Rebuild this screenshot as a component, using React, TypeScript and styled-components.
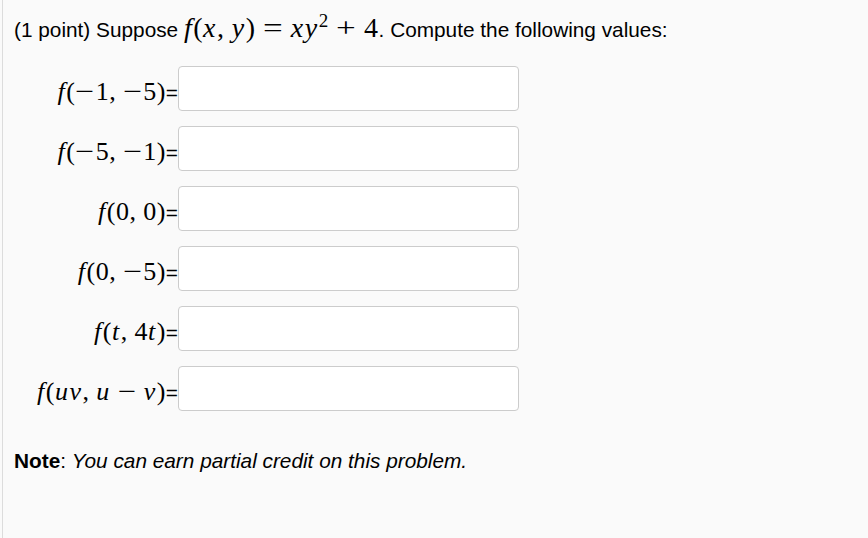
import React from "react";
import styled, { createGlobalStyle } from "styled-components";

const GlobalStyle = createGlobalStyle`
  html, body {
    margin: 0;
    padding: 0;
    background: #fafafa;
  }
`;

const Page = styled.div`
  box-sizing: border-box;
  min-height: 538px;
  margin-left: 2px;
  border-left: 1px solid #dcdcdc;
  padding: 11px 0 0 11px;
  font-family: "Liberation Sans", Arial, sans-serif;
  font-size: 20.8px;
  color: #000;
`;

const Title = styled.div`
  display: flex;
  align-items: baseline;
  line-height: 34px;
  white-space: pre;
`;

const Math = styled.span<{ $size?: number }>`
  font-family: "Liberation Serif", "Times New Roman", serif;
  font-size: ${(p) => p.$size ?? 26}px;
  letter-spacing: 0.5px;
  white-space: pre;
`;

const V = styled.i`
  font-style: italic;
  padding-right: 1px;
`;

const Bin = styled.span`
  display: inline-block;
  margin: 0 0.34em;
  transform: scaleX(1.25);
`;

const Comma = styled.span`
  margin-right: 0.26em;
`;

const Neg = styled.span`
  display: inline-block;
  width: 0.78em;
  text-align: center;
  transform: scaleX(1.3);
`;

const Sup = styled.sup`
  font-size: 0.68em;
  vertical-align: 0.5em;
  line-height: 0;
`;

const Form = styled.div`
  display: grid;
  grid-template-columns: 164px 341px;
  row-gap: 15px;
  margin-top: 19px;
`;

const Label = styled.label`
  display: flex;
  justify-content: flex-end;
  align-items: baseline;
  padding-top: 11px;
  white-space: pre;
`;

const Eq = styled.span`
  font-family: "Liberation Sans", Arial, sans-serif;
  font-size: 20.8px;
`;

const Answer = styled.input`
  box-sizing: border-box;
  height: 45px;
  width: 341px;
  margin: 0;
  background: #fff;
  border: 1px solid #cccccc;
  border-radius: 4px;
  font-size: 18px;
  padding: 0 8px;
`;

const Note = styled.p`
  margin: 38px 0 0;
  line-height: 24px;
`;

const Minus = () => <Neg>−</Neg>;

const rows: React.ReactNode[] = [
  <>
    <V>f</V>(<Minus />1<Comma>,</Comma>
    <Minus />5)
  </>,
  <>
    <V>f</V>(<Minus />5<Comma>,</Comma>
    <Minus />1)
  </>,
  <>
    <V>f</V>(0<Comma>,</Comma>0)
  </>,
  <>
    <V>f</V>(0<Comma>,</Comma>
    <Minus />5)
  </>,
  <>
    <V>f</V>(<V>t</V>
    <Comma>,</Comma>4<V>t</V>)
  </>,
  <>
    <V>f</V>(<V>u</V>
    <V>v</V>
    <Comma>,</Comma>
    <V>u</V>
    <Bin>−</Bin>
    <V>v</V>)
  </>,
];

export default function App() {
  return (
    <>
      <GlobalStyle />
      <Page>
        <Title>
          (1 point) Suppose{" "}
          <Math $size={28}>
            <V>f</V>(<V>x</V>
            <Comma>,</Comma>
            <V>y</V>)<Bin>=</Bin>
            <V>x</V>
            <V>y</V>
            <Sup>2</Sup>
            <Bin>+</Bin>4
          </Math>
          . Compute the following values:
        </Title>
        <Form>
          {rows.map((content, i) => (
            <React.Fragment key={i}>
              <Label>
                <Math>{content}</Math>
                <Eq>=</Eq>
              </Label>
              <Answer type="text" aria-label={`answer ${i + 1}`} />
            </React.Fragment>
          ))}
        </Form>
        <Note>
          <b>Note</b>: <i>You can earn partial credit on this problem.</i>
        </Note>
      </Page>
    </>
  );
}
